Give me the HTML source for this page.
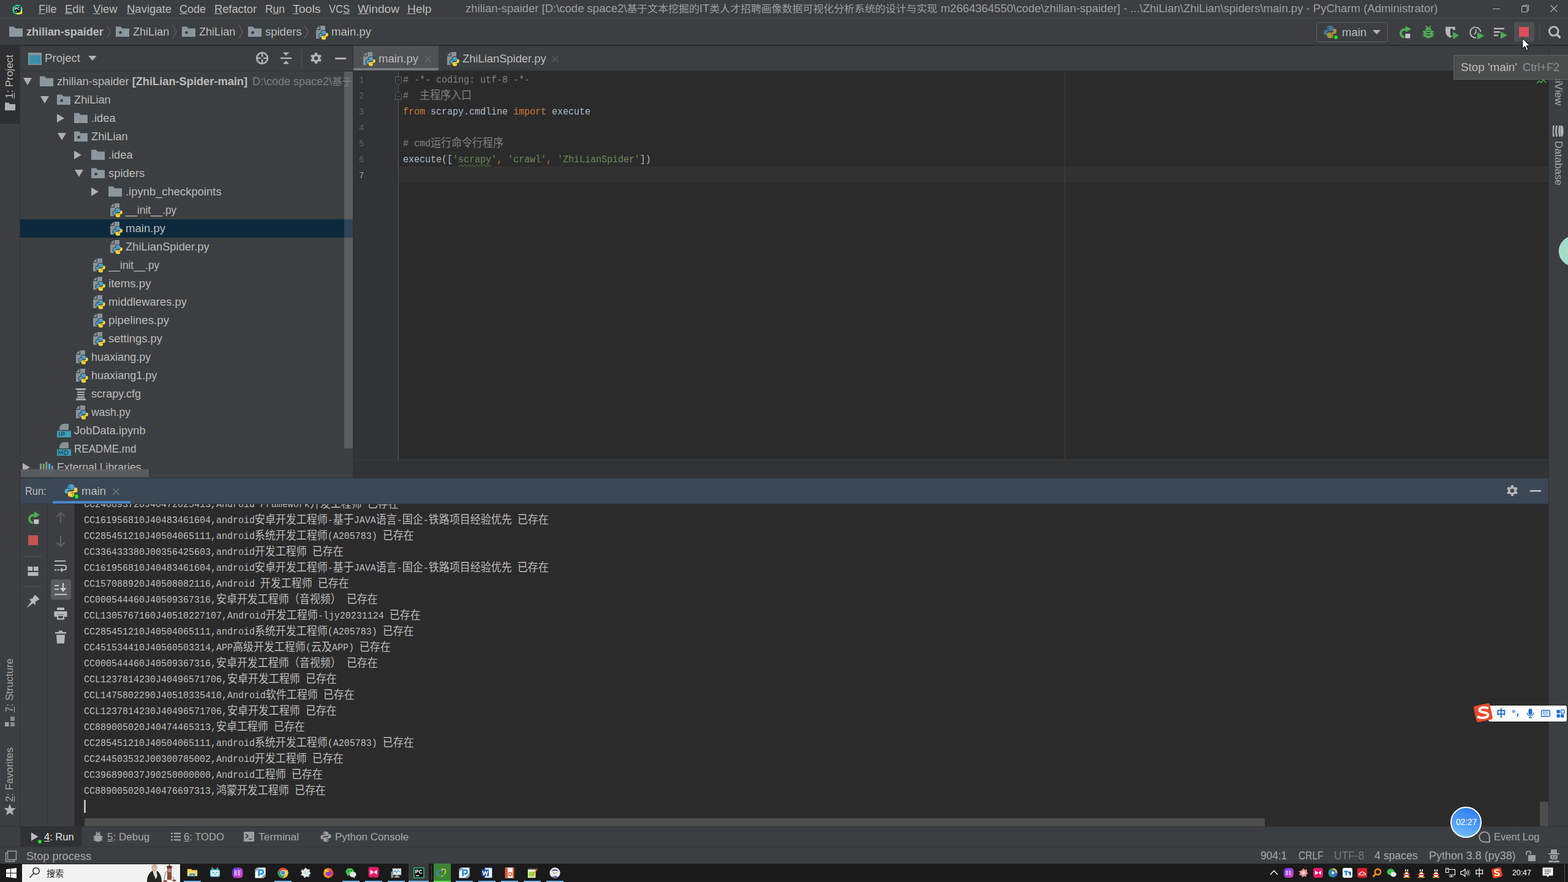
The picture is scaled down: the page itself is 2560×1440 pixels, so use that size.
<!DOCTYPE html>
<html><head><meta charset="utf-8"><title>PyCharm</title><style>
html,body{margin:0;padding:0}
body{width:2560px;height:1440px;overflow:hidden;background:#3c3f41;position:relative;font-family:"Liberation Sans","Noto Sans CJK SC",sans-serif;font-size:18px;color:#bbbbbb}
.a{position:absolute}
.b{position:absolute;display:block}
.t{position:absolute;white-space:pre;font-size:18px;line-height:30px;height:30px;transform-origin:0 50%;color:#bbbbbb}
.t b{font-weight:bold}
.t u{text-decoration:underline;text-underline-offset:1.2px;text-decoration-thickness:1px}
.m{position:absolute;white-space:pre;font-family:"Liberation Mono",monospace;font-size:16.66px;line-height:26px;height:26px;color:#a9b7c6;transform:scaleX(.9);transform-origin:0 50%}
.cj{display:inline-block;position:relative;overflow:hidden;white-space:nowrap;vertical-align:top;height:26px;text-align:left;font-family:"Liberation Sans","Noto Sans CJK SC",sans-serif}
.m .cj{font-size:18.89px;line-height:24px}
.v{position:absolute;white-space:pre;font-size:17px;line-height:30px;height:30px;color:#bbbbbb;transform-origin:0 0}
svg{position:absolute;overflow:visible}
</style></head><body>
<svg width="0" height="0" style="position:absolute;left:-10px;top:-10px"><defs>
<symbol id="folder" viewBox="0 0 22 17"><path d="M0 0.5H8L10.3 3.5H22V17H0Z" fill="#8b979e"/></symbol>
<symbol id="folderdot" viewBox="0 0 22 17"><path d="M0 0.5H8L10.3 3.5H22V17H0Z" fill="#8b979e"/><circle cx="7.6" cy="10.2" r="2.4" fill="#3c3f41"/></symbol>
<g id="pylogo">
<path id="pyhalf" d="M7.9 0.4C5.4 0.4 4.3 1.4 4.3 3.1V5.1H8.1V5.8H2.8C1.1 5.8 0.3 7.1 0.3 8.9C0.3 10.8 1.1 12 2.8 12H4.2V9.8C4.2 8.3 5.4 7.2 6.9 7.2H10.1C11.3 7.2 12.1 6.3 12.1 5.1V3.1C12.1 1.5 10.6 0.4 7.9 0.4Z"/>
</g>
<symbol id="python" viewBox="0 0 16.4 16.4"><use href="#pyhalf" fill="#4ea1cf"/><circle cx="6.1" cy="2.8" r=".8" fill="#2b5b7a"/><use href="#pyhalf" fill="#f5d23c" transform="rotate(180 8.2 8.2)"/><circle cx="10.3" cy="13.6" r=".8" fill="#8a7416"/></symbol>
<symbol id="pythong" viewBox="0 0 16.4 16.4"><use href="#pyhalf" fill="#9da0a2"/><circle cx="6.1" cy="2.8" r=".8" fill="#3c3f41"/><use href="#pyhalf" fill="#9da0a2" transform="rotate(180 8.2 8.2)"/><circle cx="10.3" cy="13.6" r=".8" fill="#3c3f41"/></symbol>
<symbol id="pyfile" viewBox="0 0 22 24"><path d="M8 1H16V13H7V22H1V8Z" fill="#87929a"/><path d="M6.6 1V6.6H1Z" fill="#87929a"/><path d="M7.4 1V7.4H1" fill="none" stroke="#3c3f41" stroke-width="1.2"/>
<g transform="translate(5.6 8.6) scale(0.95)"><use href="#pyhalf" fill="#3c3f41" stroke="#3c3f41" stroke-width="2.2"/><use href="#pyhalf" fill="#3c3f41" stroke="#3c3f41" stroke-width="2.2" transform="rotate(180 8.2 8.2)"/><use href="#pyhalf" fill="#4ea1cf"/><use href="#pyhalf" fill="#f5d23c" transform="rotate(180 8.2 8.2)"/></g></symbol>
<symbol id="cfg" viewBox="0 0 23 22"><path d="M0 2H18L16 5H2Z M3 7.2H15V9.4H3Z M3 11.2H15V13.4H3Z M3 15.2H15V17.4H3Z M2 18.6H16L18 21.6H0Z" fill="#aeb1b3"/></symbol>
<symbol id="ipynb" viewBox="0 0 23 22"><path d="M10 0H19V10H4V6Z" fill="#87929a"/><path d="M8.8 0V4.8H4Z" fill="#87929a"/><rect x="0" y="11.5" width="23" height="11" fill="#3f9fb5"/><path d="M4 13.8V20.2 M7.5 20.2V13.8H10.2C12.8 13.8 12.8 17.6 10.2 17.6H7.5" fill="none" stroke="#23586a" stroke-width="1.7"/></symbol>
<symbol id="md" viewBox="0 0 23 22"><path d="M10 0H19V10H4V6Z" fill="#87929a"/><path d="M8.8 0V4.8H4Z" fill="#87929a"/><rect x="0" y="11.5" width="23" height="11" fill="#3f9fb5"/><path d="M2.8 20.2V13.8L6 18L9.2 13.8V20.2 M12.5 13.8V20.2H14.5C19 20.2 19 13.8 14.5 13.8Z" fill="none" stroke="#23586a" stroke-width="1.7"/></symbol>
<symbol id="libs" viewBox="0 0 23 22"><rect x="0" y="5" width="3" height="16" fill="#87929a"/><rect x="4.7" y="5" width="3" height="16" fill="#62b543"/><rect x="9.4" y="2" width="3" height="19" fill="#87929a"/><rect x="14.1" y="5" width="3" height="16" fill="#40b6e0"/><rect x="18.8" y="8" width="3" height="13" fill="#87929a"/></symbol>
<symbol id="pc" viewBox="0 0 17 17"><path d="M1 4L7 0.6L11.5 1.4L12.5 0.2L12.6 3L16.6 6L16 15L9 16.8L2 14.5L0.4 9Z" fill="#2ed58a"/><path d="M15.6 8L16.2 15.4L9 16.8L5 15.5L12 12.5Z" fill="#e9f24d"/><path d="M12.6 3L16.7 6L16 9.5L12.8 9Z" fill="#2cc6d8"/><rect x="3.6" y="3.6" width="9.7" height="9.7" fill="#000"/><path d="M4.7 11.4H8" stroke="#fff" stroke-width="1"/><path d="M4.9 9V5H6.2C7.8 5 7.8 7.3 6.2 7.3H4.9 M11.9 5.5C10.2 4.4 8.7 5.4 8.7 7C8.7 8.6 10.2 9.6 11.9 8.5" fill="none" stroke="#fff" stroke-width="1.15"/></symbol>
<symbol id="rerun" viewBox="0 0 22 22"><path d="M10.8 19.5A6.2 6.2 0 1 1 12.6 7.3" fill="none" stroke="#4fad53" stroke-width="3.7"/><path d="M12.6 1L22 6.4L12.6 11.8Z" fill="#4fad53"/><rect x="12.3" y="14" width="8" height="7.4" fill="#c3c5c6"/></symbol>
<symbol id="bug" viewBox="0 0 22 22"><path d="M7 1.2L9.2 4 M15 1.2L12.8 4" stroke="#4fad53" stroke-width="2"/><path d="M6 8.2C6 1.8 16 1.8 16 8.2Z" fill="#4fad53"/><path d="M4 9H18V15C18 23.4 4 23.4 4 15Z" fill="#4fad53"/><path d="M1.8 10.8H20.2 M1.8 14.3H20.2 M2.4 17.8H19.6" stroke="#4fad53" stroke-width="2.1"/><rect x="7.6" y="11.3" width="6.8" height="1.7" fill="#3c3f41"/><rect x="7.6" y="15.2" width="6.8" height="1.7" fill="#3c3f41"/></symbol>
<symbol id="bugg" viewBox="0 0 22 22"><path d="M7 1.2L9.2 4 M15 1.2L12.8 4" stroke="#9da0a2" stroke-width="2"/><path d="M6 8.2C6 1.8 16 1.8 16 8.2Z" fill="#9da0a2"/><path d="M4 9H18V15C18 23.4 4 23.4 4 15Z" fill="#9da0a2"/><path d="M1.8 10.8H20.2 M1.8 14.3H20.2 M2.4 17.8H19.6" stroke="#9da0a2" stroke-width="2.1"/></symbol>
<symbol id="coverage" viewBox="0 0 24 22"><path d="M0.1 0.7H15.8V5.9H11.7V15.6C10.4 17 9 18 7.6 18.6C3 16.6 0.1 13 0.1 8Z" fill="#b6b8ba"/><rect x="7.9" y="3.6" width="3.9" height="11.7" fill="#35383a"/><path d="M11.9 8.4L22.6 14.8L11.9 21.3Z" fill="#4fad53" stroke="#31503a" stroke-width=".8"/></symbol>
<symbol id="profile" viewBox="0 0 24 22"><path d="M10 1.5A8.5 8.5 0 1 0 11 18.4 M10 1.5A8.5 8.5 0 0 1 18.4 9" fill="none" stroke="#b6b8ba" stroke-width="2"/><path d="M10.5 5V10.5L7.5 13" fill="none" stroke="#b6b8ba" stroke-width="1.8"/><path d="M13 9.5L24 15.5L13 21.5Z" fill="#4fad53"/></symbol>
<symbol id="concur" viewBox="0 0 24 22"><path d="M1 2.5H18V5H1Z M1 8H11V10.5H1Z M1 13.5H8V16H1Z" fill="#b6b8ba"/><path d="M12 8.5L23 14.5L12 20.5Z" fill="#4fad53"/></symbol>
<symbol id="search" viewBox="0 0 22 22"><circle cx="10.7" cy="10" r="7.3" fill="none" stroke="#b6b8ba" stroke-width="3"/><path d="M15.8 15.1L21.6 20.9" stroke="#b6b8ba" stroke-width="3.6"/></symbol>
<symbol id="projview" viewBox="0 0 22 22"><rect x="0.8" y="1.8" width="20.4" height="18.4" fill="#3a8fa5" stroke="#8b979e" stroke-width="1.6"/><rect x="0" y="1" width="22" height="4" fill="#8b979e"/></symbol>
<symbol id="target" viewBox="0 0 22 22"><circle cx="11" cy="11" r="8.9" fill="none" stroke="#b0b3b5" stroke-width="2.6"/><path d="M11 1V9 M11 13V21 M1 11H9 M13 11H21" stroke="#b0b3b5" stroke-width="2.6"/></symbol>
<symbol id="collapse" viewBox="0 0 22 22"><path d="M2 9.7H20V12.3H2Z M5.8 1.5H16.2L11 7Z M5.8 20.5H16.2L11 15Z" fill="#b0b3b5"/></symbol>
<symbol id="gear" viewBox="0 0 22 22"><path d="M9.2 1H12.8L13.4 3.8L15.4 4.9L18.1 3.9L19.9 7L17.8 8.9V11.1L19.9 13L18.1 16.1L15.4 15.1L13.4 16.2L12.8 19H9.2L8.6 16.2L6.6 15.1L3.9 16.1L2.1 13L4.2 11.1V8.9L2.1 7L3.9 3.9L6.6 4.9L8.6 3.8Z" transform="translate(0 1)" fill="#b0b3b5"/><circle cx="11" cy="11" r="3.1" fill="#3c3f41"/></symbol>
<symbol id="structure" viewBox="0 0 16 16"><rect x="0" y="9" width="6.5" height="7" fill="#9da0a2"/><rect x="9" y="9" width="7" height="7" fill="#9da0a2" opacity=".75"/><rect x="9" y="0" width="7" height="7" fill="#9da0a2" opacity=".75"/></symbol>
<symbol id="star" viewBox="0 0 20 20"><path d="M10 0.5L12.6 7.2L19.8 7.6L14.2 12.1L16.1 19L10 15.1L3.9 19L5.8 12.1L0.2 7.6L7.4 7.2Z" fill="#b0b3b5"/></symbol>
<symbol id="database" viewBox="0 0 18 20"><g fill="none" stroke="#b0b3b5" stroke-width="2.6"><path d="M2 1C0 6 0 14 2 19"/><path d="M7 1C5 6 5 14 7 19"/><path d="M12 1C10 6 10 14 12 19"/></g><ellipse cx="15" cy="10" rx="2.6" ry="9.4" fill="#b0b3b5"/></symbol>
<symbol id="layout" viewBox="0 0 20 18"><rect x="0" y="0" width="9" height="8" fill="#b6b8ba"/><rect x="11" y="0" width="9" height="8" fill="#b6b8ba"/><rect x="0" y="10.5" width="20" height="7.5" fill="#b6b8ba"/></symbol>
<symbol id="pin" viewBox="0 0 22 22"><path d="M14.1 0.1L21.6 7.3L14.9 11.2L14.7 17L10.8 13.7L0.2 22L8 11L4.8 7L9.7 6.5Z" fill="#b6b8ba"/></symbol>
<symbol id="arrup" viewBox="0 0 22 22"><path d="M11 20V3 M4.5 9.5L11 3L17.5 9.5" fill="none" stroke="#5c6062" stroke-width="2.4"/></symbol>
<symbol id="arrdown" viewBox="0 0 22 22"><path d="M11 2V19 M4.5 12.5L11 19L17.5 12.5" fill="none" stroke="#5c6062" stroke-width="2.4"/></symbol>
<symbol id="softwrap" viewBox="0 0 22 22"><path d="M1 3H19 M1 10H16C21.5 10 21.5 17.5 16 17.5H12" fill="none" stroke="#b6b8ba" stroke-width="2.2"/><path d="M14 13.5L9.5 17.5L14 21.5Z" fill="#b6b8ba"/><rect x="1" y="16.4" width="3" height="2.4" fill="#b6b8ba"/><rect x="5.5" y="16.4" width="3" height="2.4" fill="#b6b8ba"/></symbol>
<symbol id="scrollend" viewBox="0 0 22 22"><path d="M1 5H8 M1 11H8 M1 19.5H21" fill="none" stroke="#c7c9ca" stroke-width="2.2"/><path d="M15 1V12" stroke="#c7c9ca" stroke-width="2.4"/><path d="M9.5 9L15 15.5L20.5 9Z" fill="#c7c9ca"/></symbol>
<symbol id="print" viewBox="0 0 22 22"><rect x="5" y="1" width="12" height="4" fill="#b6b8ba"/><path d="M0.5 7H21.5V16H17V12H5V16H0.5Z" fill="#b6b8ba"/><rect x="6.1" y="13.6" width="9.8" height="6" fill="none" stroke="#b6b8ba" stroke-width="2.2"/></symbol>
<symbol id="trash" viewBox="0 0 20 22"><path d="M7 0.5H13V3H19V5.5H1V3H7Z M3 7.5H17L16 21.5H4Z" fill="#b6b8ba"/></symbol>
<symbol id="play" viewBox="0 0 16 18"><path d="M1 1L14 9L1 17Z" fill="#b6b8ba"/></symbol>
<symbol id="todo" viewBox="0 0 16 14"><path d="M0 0.5H3V3H0Z M5 0.5H16V3H5Z M0 5.7H3V8.2H0Z M5 5.7H16V8.2H5Z M0 11H3V13.5H0Z M5 11H16V13.5H5Z" fill="#9da0a2"/></symbol>
<symbol id="term" viewBox="0 0 17 16"><rect x="0" y="0" width="17" height="16" rx="1" fill="#9da0a2"/><path d="M3 3.5L7 7L3 10.5 M8 12H13.5" fill="none" stroke="#3c3f41" stroke-width="1.7"/></symbol>
<symbol id="bubble" viewBox="0 0 19 19"><path d="M9.5 1.2A8.3 8.3 0 1 0 9.5 17.8H17.8V9.5A8.3 8.3 0 0 0 9.5 1.2Z" fill="none" stroke="#9da0a2" stroke-width="2"/></symbol>
<symbol id="lock" viewBox="0 0 18 20"><path d="M2 9V6.5C2 1.5 9 1.5 9 6.5V8" fill="none" stroke="#9da0a2" stroke-width="2"/><rect x="5" y="9" width="12" height="10" fill="#9da0a2"/></symbol>
<symbol id="hector" viewBox="0 0 20 22"><path d="M5 1H15V7H19V9H1V7H5Z" fill="#9da0a2"/><path d="M4 10H16V14C16 19 4 19 4 14Z" fill="#9da0a2"/><circle cx="7.8" cy="12.8" r="1.1" fill="#3c3f41"/><circle cx="12.2" cy="12.8" r="1.1" fill="#3c3f41"/><path d="M7.5 15.2C9 16.6 11 16.6 12.5 15.2" fill="none" stroke="#3c3f41" stroke-width="1"/><path d="M1 22C1 18 5 18 10 20C15 18 19 18 19 22Z" fill="#9da0a2"/></symbol>
</defs></svg>

<div class="a" style="left:0px;top:0px;width:2560px;height:30px;background:#3c3f41;"></div>
<div class="a" style="left:0px;top:29px;width:2560px;height:1px;background:#4b4e50;"></div>
<div class="a" style="left:0px;top:30px;width:2560px;height:44px;background:#3c3f41;"></div>
<div class="a" style="left:0px;top:73px;width:2560px;height:2px;background:#2d2f30;"></div>
<div class="a" style="left:0px;top:75px;width:32px;height:1275px;background:#3c3f41;"></div>
<div class="a" style="left:0px;top:75px;width:32px;height:127px;background:#2d2f30;"></div>
<div class="a" style="left:32px;top:75px;width:1px;height:1275px;background:#323232;"></div>
<div class="a" style="left:33px;top:75px;width:543px;height:40px;background:#3c3f41;"></div>
<div class="a" style="left:33px;top:115px;width:543px;height:1px;background:#323232;"></div>
<div class="a" style="left:33px;top:116px;width:543px;height:665px;background:#3c3f41;"></div>
<div class="a" style="left:33px;top:358px;width:543px;height:30px;background:#0d293e;"></div>
<div class="a" style="left:562px;top:117px;width:14px;height:615px;background:#5a5d5e;"></div>
<div class="a" style="left:562px;top:358px;width:14px;height:30px;background:#2f4557;"></div>
<div class="a" style="left:34px;top:766px;width:209px;height:13px;background:#595b5d;"></div>
<div class="a" style="left:576px;top:75px;width:1px;height:41px;background:#2b2d2e;"></div>
<div class="a" style="left:577px;top:75px;width:1952px;height:40px;background:#3c3f41;"></div>
<div class="a" style="left:577px;top:75px;width:139px;height:40px;background:#4e5254;"></div>
<div class="a" style="left:577px;top:111px;width:139px;height:4px;background:#747a80;"></div>
<div class="a" style="left:577px;top:115px;width:1952px;height:1px;background:#323232;"></div>
<div class="a" style="left:576px;top:116px;width:75px;height:634px;background:#313335;"></div>
<div class="a" style="left:651px;top:116px;width:1878px;height:634px;background:#2b2b2b;"></div>
<div class="a" style="left:650px;top:116px;width:1px;height:634px;background:#555555;"></div>
<div class="a" style="left:651px;top:272px;width:1878px;height:26px;background:#323232;"></div>
<div class="a" style="left:1738px;top:116px;width:1px;height:634px;background:#3f3f3f;"></div>
<div class="a" style="left:576px;top:750px;width:1953px;height:31px;background:#313335;"></div>
<div class="a" style="left:576px;top:750px;width:1953px;height:1px;background:#3a3d3e;"></div>
<div class="a" style="left:2529px;top:75px;width:31px;height:1275px;background:#3c3f41;"></div>
<div class="a" style="left:2528px;top:75px;width:1px;height:1275px;background:#323232;"></div>
<div class="a" style="left:33px;top:781px;width:2495px;height:41px;background:#3b4754;"></div>
<div class="a" style="left:33px;top:780px;width:2495px;height:1px;background:#323232;"></div>
<div class="a" style="left:33px;top:822px;width:2495px;height:1px;background:#2f3a45;"></div>
<div class="a" style="left:86px;top:818px;width:127px;height:4px;background:#4a88c7;"></div>
<div class="a" style="left:33px;top:823px;width:89px;height:527px;background:#3c3f41;"></div>
<div class="a" style="left:77px;top:823px;width:1px;height:527px;background:#323232;"></div>
<div class="a" style="left:121px;top:823px;width:1px;height:527px;background:#323232;"></div>
<div class="a" style="left:122px;top:823px;width:2406px;height:527px;background:#2b2b2b;"></div>
<div class="a" style="left:138px;top:1336px;width:1927px;height:13px;background:#4d4d4d;"></div>
<div class="a" style="left:2514px;top:1309px;width:14px;height:40px;background:#4d4d4d;"></div>
<div class="a" style="left:0px;top:1349px;width:2560px;height:1px;background:#323232;"></div>
<div class="a" style="left:0px;top:1350px;width:2560px;height:33px;background:#3c3f41;"></div>
<div class="a" style="left:33px;top:1350px;width:101px;height:32px;background:#2f3234;"></div>
<div class="a" style="left:0px;top:1382px;width:2560px;height:1px;background:#323232;"></div>
<div class="a" style="left:0px;top:1383px;width:2560px;height:28px;background:#3c3f41;"></div>
<div class="a" style="left:0px;top:1411px;width:2560px;height:29px;background:#1a1a1a;"></div>
<span class="t" style="left:63px;top:0.0px;transform:scaleX(1.0172);"><u>F</u>ile</span>
<span class="t" style="left:106px;top:0.0px;transform:scaleX(1.0161);"><u>E</u>dit</span>
<span class="t" style="left:151.5px;top:0.0px;transform:scaleX(1.0256);"><u>V</u>iew</span>
<span class="t" style="left:206.5px;top:0.0px;transform:scaleX(1.0282);"><u>N</u>avigate</span>
<span class="t" style="left:293px;top:0.0px;transform:scaleX(1.0000);"><u>C</u>ode</span>
<span class="t" style="left:350px;top:0.0px;transform:scaleX(1.0147);"><u>R</u>efactor</span>
<span class="t" style="left:433px;top:0.0px;transform:scaleX(0.9697);">R<u>u</u>n</span>
<span class="t" style="left:478px;top:0.0px;transform:scaleX(1.0833);"><u>T</u>ools</span>
<span class="t" style="left:537px;top:0.0px;transform:scaleX(0.9189);">VC<u>S</u></span>
<span class="t" style="left:584px;top:0.0px;transform:scaleX(1.0625);"><u>W</u>indow</span>
<span class="t" style="left:665px;top:0.0px;transform:scaleX(1.0676);"><u>H</u>elp</span>
<span class="t" style="left:760px;top:-1.0px;color:#9c9ea0;transform:scaleX(1.0285);">zhilian-spaider [D:\code space2\<span class="cj" style="width:115.15px;height:30px;font-size:16.45px;">基于文本挖掘的</span>IT<span class="cj" style="width:361.90px;height:30px;font-size:16.45px;">类人才招聘画像数据可视化分析系统的设计与实现</span> m2664364550\code\zhilian-spaider] - ...\ZhiLian\ZhiLian\spiders\main.py - PyCharm (Administrator)</span>
<svg class="b" style="left:19.5px;top:6.5px;" width="17" height="17"><use href="#pc"/></svg>
<div class="a" style="left:2437px;top:14px;width:12px;height:1px;background:#bbbbbb;"></div>
<svg class="b" style="left:2484px;top:8px" width="12" height="12"><path d="M0.5 2.5h9v9h-9z M2.5 2.5v-2h9v9h-2" fill="none" stroke="#bbb" stroke-width="1"/></svg>
<svg class="b" style="left:2531px;top:8px" width="12" height="12"><path d="M0.5 0.5l11 11M11.5 0.5l-11 11" fill="none" stroke="#bbb" stroke-width="1.1"/></svg>
<svg class="b" style="left:15px;top:43px;" width="22" height="17"><use href="#folder"/></svg>
<span class="t" style="left:43px;top:37.0px;transform:scaleX(0.9968);"><b>zhilian-spaider</b></span>
<svg class="b" style="left:173px;top:40px" width="8" height="24"><path d="M1 1l6 11l-6 11" fill="none" stroke="#5f6265" stroke-width="1.3"/></svg>
<svg class="b" style="left:189px;top:43px;" width="22" height="17"><use href="#folderdot"/></svg>
<span class="t" style="left:217.4px;top:37.0px;transform:scaleX(1.0034);">ZhiLian</span>
<svg class="b" style="left:281px;top:40px" width="8" height="24"><path d="M1 1l6 11l-6 11" fill="none" stroke="#5f6265" stroke-width="1.3"/></svg>
<svg class="b" style="left:297px;top:43px;" width="22" height="17"><use href="#folderdot"/></svg>
<span class="t" style="left:325.4px;top:37.0px;transform:scaleX(1.0034);">ZhiLian</span>
<svg class="b" style="left:389px;top:40px" width="8" height="24"><path d="M1 1l6 11l-6 11" fill="none" stroke="#5f6265" stroke-width="1.3"/></svg>
<svg class="b" style="left:405px;top:43px;" width="22" height="17"><use href="#folderdot"/></svg>
<span class="t" style="left:433px;top:37.0px;transform:scaleX(1.0259);">spiders</span>
<svg class="b" style="left:496px;top:40px" width="8" height="24"><path d="M1 1l6 11l-6 11" fill="none" stroke="#5f6265" stroke-width="1.3"/></svg>
<svg class="b" style="left:515px;top:41px;" width="22" height="24"><use href="#pyfile"/></svg>
<span class="t" style="left:541px;top:37.0px;transform:scaleX(1.0317);">main.py</span>
<div class="a" style="left:2149px;top:36px;width:115px;height:31px;border:1px solid #5e6162;border-radius:4px"></div>
<svg class="b" style="left:2161px;top:41px;opacity:.58" width="21.5" height="22"><use href="#python"/></svg>
<div class="a" style="left:2176.6px;top:56.8px;width:8.8px;height:8.8px;border-radius:5px;background:#2e3a30"></div><div class="a" style="left:2177.7px;top:57.9px;width:6.6px;height:6.6px;border-radius:4px;background:#22e02a"></div>
<span class="t" style="left:2190.5px;top:37.5px;transform:scaleX(1.0256);">main</span>
<svg class="b" style="left:2241.2px;top:49px" width="13.2" height="7" viewBox="0 0 13.2 7"><path d="M0 0h13.2l-6.6 7z" fill="#b0b3b5"/></svg>
<svg class="b" style="left:2282px;top:41px;" width="22" height="22"><use href="#rerun"/></svg>
<svg class="b" style="left:2321px;top:41px;" width="22" height="22"><use href="#bug"/></svg>
<svg class="b" style="left:2360px;top:42.5px;" width="24" height="22"><use href="#coverage"/></svg>
<svg class="b" style="left:2399px;top:42.5px;" width="24" height="22"><use href="#profile"/></svg>
<svg class="b" style="left:2438px;top:42.5px;" width="24" height="22"><use href="#concur"/></svg>
<div class="a" style="left:2472px;top:36px;width:33px;height:32px;border-radius:4px;background:#4c5052"></div>
<div class="a" style="left:2480px;top:44px;width:16px;height:16px;background:#db4f59;"></div>
<div class="a" style="left:2513px;top:41px;width:1px;height:24px;background:#505355;"></div>
<svg class="b" style="left:2526px;top:41px;" width="22" height="22"><use href="#search"/></svg>
<span class="v" style="left:1px;top:161px;transform:rotate(-90deg)"><u style="text-underline-offset:2px;text-decoration-thickness:1px">1</u>: Project</span>
<svg class="b" style="left:7.5px;top:167px" width="17" height="13.5" viewBox="0 0 22 17"><path d="M0 0.5H8L10.3 3.5H22V17H0Z" fill="#afb1b3"/></svg>
<span class="v" style="left:1px;top:1163px;transform:rotate(-90deg);color:#a6a8aa"><u style="text-underline-offset:2px;text-decoration-thickness:1px">7</u>: Structure</span>
<svg class="b" style="left:8px;top:1170px;" width="16" height="16"><use href="#structure"/></svg>
<span class="v" style="left:1px;top:1309px;transform:rotate(-90deg);color:#a6a8aa"><u style="text-underline-offset:2px;text-decoration-thickness:1px">2</u>: Favorites</span>
<svg class="b" style="left:6px;top:1312px;" width="20" height="20"><use href="#star"/></svg>
<span class="v" style="left:2559px;top:112px;transform:rotate(90deg);color:#a6a8aa">SciView</span>
<svg class="b" style="left:2535px;top:204px;" width="18" height="20"><use href="#database"/></svg>
<span class="v" style="left:2559px;top:230px;transform:rotate(90deg);color:#a6a8aa">Database</span>
<svg class="b" style="left:46px;top:85px;" width="22" height="22"><use href="#projview"/></svg>
<span class="t" style="left:73px;top:80.0px;transform:scaleX(1.0357);">Project</span>
<svg class="b" style="left:144px;top:91px" width="14" height="9"><path d="M0 0h14l-7 8z" fill="#b0b3b5"/></svg>
<svg class="b" style="left:417px;top:84px;" width="22" height="22"><use href="#target"/></svg>
<svg class="b" style="left:456px;top:84px;" width="22" height="22"><use href="#collapse"/></svg>
<div class="a" style="left:492px;top:80px;width:1px;height:30px;background:#505355;"></div>
<svg class="b" style="left:505px;top:84px;" width="22" height="22"><use href="#gear"/></svg>
<div class="a" style="left:547px;top:94px;width:18px;height:3px;background:#afb1b3;"></div>
<svg class="b" style="left:38px;top:126.5px" width="14" height="12"><path d="M0 0h14l-7 12z" fill="#adb0b2"/></svg>
<svg class="b" style="left:65px;top:124.0px;" width="22" height="17"><use href="#folder"/></svg>
<span class="t" style="left:93px;top:117.5px;transform:scaleX(1.0130);">zhilian-spaider <b>[ZhiLian-Spider-main]</b></span>
<svg class="b" style="left:66px;top:156.5px" width="14" height="12"><path d="M0 0h14l-7 12z" fill="#adb0b2"/></svg>
<svg class="b" style="left:93px;top:154.0px;" width="22" height="17"><use href="#folderdot"/></svg>
<span class="t" style="left:121px;top:147.5px;transform:scaleX(1.0119);">ZhiLian</span>
<svg class="b" style="left:93px;top:185.5px" width="12" height="14"><path d="M0 0v14l12-7z" fill="#adb0b2"/></svg>
<svg class="b" style="left:121px;top:184.0px;" width="22" height="17"><use href="#folder"/></svg>
<span class="t" style="left:149px;top:177.5px;transform:scaleX(1.0128);">.idea</span>
<svg class="b" style="left:94px;top:216.5px" width="14" height="12"><path d="M0 0h14l-7 12z" fill="#adb0b2"/></svg>
<svg class="b" style="left:121px;top:214.0px;" width="22" height="17"><use href="#folderdot"/></svg>
<span class="t" style="left:149px;top:207.5px;transform:scaleX(1.0119);">ZhiLian</span>
<svg class="b" style="left:121px;top:245.5px" width="12" height="14"><path d="M0 0v14l12-7z" fill="#adb0b2"/></svg>
<svg class="b" style="left:149px;top:244.0px;" width="22" height="17"><use href="#folder"/></svg>
<span class="t" style="left:177px;top:237.5px;transform:scaleX(1.0128);">.idea</span>
<svg class="b" style="left:122px;top:276.5px" width="14" height="12"><path d="M0 0h14l-7 12z" fill="#adb0b2"/></svg>
<svg class="b" style="left:149px;top:274.0px;" width="22" height="17"><use href="#folderdot"/></svg>
<span class="t" style="left:177px;top:267.5px;transform:scaleX(1.0224);">spiders</span>
<svg class="b" style="left:149px;top:305.5px" width="12" height="14"><path d="M0 0v14l12-7z" fill="#adb0b2"/></svg>
<svg class="b" style="left:177px;top:304.0px;" width="22" height="17"><use href="#folder"/></svg>
<span class="t" style="left:205px;top:297.5px;transform:scaleX(1.0229);">.ipynb_checkpoints</span>
<svg class="b" style="left:179px;top:330.5px;" width="22" height="24"><use href="#pyfile"/></svg>
<span class="t" style="left:205px;top:327.5px;transform:scaleX(0.9540);">__init__.py</span>
<svg class="b" style="left:179px;top:360.5px;" width="22" height="24"><use href="#pyfile"/></svg>
<span class="t" style="left:205px;top:357.5px;transform:scaleX(1.0317);">main.py</span>
<svg class="b" style="left:179px;top:390.5px;" width="22" height="24"><use href="#pyfile"/></svg>
<span class="t" style="left:205px;top:387.5px;transform:scaleX(1.0187);">ZhiLianSpider.py</span>
<svg class="b" style="left:151px;top:420.5px;" width="22" height="24"><use href="#pyfile"/></svg>
<span class="t" style="left:177px;top:417.5px;transform:scaleX(0.9540);">__init__.py</span>
<svg class="b" style="left:151px;top:450.5px;" width="22" height="24"><use href="#pyfile"/></svg>
<span class="t" style="left:177px;top:447.5px;transform:scaleX(1.0373);">items.py</span>
<svg class="b" style="left:151px;top:480.5px;" width="22" height="24"><use href="#pyfile"/></svg>
<span class="t" style="left:177px;top:477.5px;transform:scaleX(1.0240);">middlewares.py</span>
<svg class="b" style="left:151px;top:510.5px;" width="22" height="24"><use href="#pyfile"/></svg>
<span class="t" style="left:177px;top:507.5px;transform:scaleX(1.0421);">pipelines.py</span>
<svg class="b" style="left:151px;top:540.5px;" width="22" height="24"><use href="#pyfile"/></svg>
<span class="t" style="left:177px;top:537.5px;transform:scaleX(1.0233);">settings.py</span>
<svg class="b" style="left:123px;top:570.5px;" width="22" height="24"><use href="#pyfile"/></svg>
<span class="t" style="left:149px;top:567.5px;transform:scaleX(1.0031);">huaxiang.py</span>
<svg class="b" style="left:123px;top:600.5px;" width="22" height="24"><use href="#pyfile"/></svg>
<span class="t" style="left:149px;top:597.5px;transform:scaleX(1.0028);">huaxiang1.py</span>
<svg class="b" style="left:123px;top:631.5px;" width="23" height="22"><use href="#cfg"/></svg>
<span class="t" style="left:149px;top:627.5px;transform:scaleX(1.0062);">scrapy.cfg</span>
<svg class="b" style="left:123px;top:660.5px;" width="22" height="24"><use href="#pyfile"/></svg>
<span class="t" style="left:149px;top:657.5px;transform:scaleX(0.9697);">wash.py</span>
<svg class="b" style="left:93px;top:691.5px;" width="23" height="22"><use href="#ipynb"/></svg>
<span class="t" style="left:121px;top:687.5px;transform:scaleX(1.0130);">JobData.ipynb</span>
<svg class="b" style="left:93px;top:721.5px;" width="23" height="22"><use href="#md"/></svg>
<span class="t" style="left:121px;top:717.5px;transform:scaleX(0.9486);">README.md</span>
<svg class="b" style="left:37px;top:755.5px" width="12" height="14"><path d="M0 0v14l12-7z" fill="#adb0b2"/></svg>
<svg class="b" style="left:65px;top:751.5px;" width="23" height="22"><use href="#libs"/></svg>
<span class="t" style="left:93px;top:747.5px;transform:scaleX(0.9821);">External Libraries</span>
<span class="t" style="left:412px;top:117.5px;color:#7d8082;">D:\code space2\<span class="cj" style="width:32.90px;height:30px;font-size:16.45px;">基于</span></span>
<div class="a" style="left:34px;top:766px;width:209px;height:13px;background:#595b5d;opacity:.85"></div>
<svg class="b" style="left:592px;top:84px;" width="22" height="24"><use href="#pyfile"/></svg>
<span class="t" style="left:618px;top:80.5px;transform:scaleX(1.0317);">main.py</span>
<svg class="b" style="left:692.5px;top:90.5px" width="11" height="11"><path d="M0.5 0.5l10 10M10.5 0.5l-10 10" fill="none" stroke="#6e7173" stroke-width="1.3"/></svg>
<svg class="b" style="left:729px;top:84px;" width="22" height="24"><use href="#pyfile"/></svg>
<span class="t" style="left:755px;top:80.5px;transform:scaleX(1.0187);">ZhiLianSpider.py</span>
<svg class="b" style="left:900.9px;top:90.5px" width="11" height="11"><path d="M0.5 0.5l10 10M10.5 0.5l-10 10" fill="none" stroke="#606365" stroke-width="1.3"/></svg>
<span class="m" style="left:585.5px;top:118px;color:#606366;font-size:15.5px">1</span>
<span class="m" style="left:585.5px;top:144px;color:#606366;font-size:15.5px">2</span>
<span class="m" style="left:585.5px;top:170px;color:#606366;font-size:15.5px">3</span>
<span class="m" style="left:585.5px;top:196px;color:#606366;font-size:15.5px">4</span>
<span class="m" style="left:585.5px;top:222px;color:#606366;font-size:15.5px">5</span>
<span class="m" style="left:585.5px;top:248px;color:#606366;font-size:15.5px">6</span>
<span class="m" style="left:585.5px;top:274px;color:#a4a3a3;font-size:15.5px">7</span>
<span class="m" style="left:658px;top:118px;color:#808080;"># -*- coding: utf-8 -*-</span>
<span class="m" style="left:658px;top:144px;color:#808080;">#  <span class="cj" style="width:94.44px;height:26px;">主程序入口</span></span>
<span class="m" style="left:658px;top:170px;"><span style="color:#cc7832">from</span> scrapy.cmdline <span style="color:#cc7832">import</span> execute</span>
<span class="m" style="left:658px;top:222px;color:#808080;"># cmd<span class="cj" style="width:132.22px;height:26px;">运行命令行程序</span></span>
<span class="m" style="left:658px;top:248px;">execute([<span style='color:#6a8759'>'<span style="text-decoration:underline wavy #5a8a4a;text-decoration-thickness:1px;text-underline-offset:3px">scrapy</span>'</span><span style='color:#cc7832'>,</span> <span style='color:#6a8759'>'crawl'</span><span style='color:#cc7832'>,</span> <span style='color:#6a8759'>'ZhiLianSpider'</span>])</span>
<svg class="b" style="left:645px;top:124.5px" width="11" height="40"><path d="M0.5 0.5h10v8.5l-5 4.5l-5-4.5z M0.5 37.5h10v-8.5l-5-4.5l-5 4.5z" fill="#2b2b2b" stroke="#606366" stroke-width="1"/><path d="M3 5.5h5 M3 32.5h5" stroke="#606366" stroke-width="1"/></svg>
<svg class="b" style="left:2508px;top:128px" width="18" height="12"><path d="M1 8l4-4l3 3l4-5l4 5" fill="none" stroke="#3faa47" stroke-width="1.6"/></svg>
<span class="t" style="left:41px;top:786.5px;transform:scaleX(0.9079);">Run:</span>
<svg class="b" style="left:105px;top:790px;" width="22" height="22"><use href="#python"/></svg>
<div class="a" style="left:120.8px;top:805.9px;width:8.8px;height:8.8px;border-radius:5px;background:#2e4236"></div><div class="a" style="left:121.9px;top:807px;width:6.6px;height:6.6px;border-radius:4px;background:#22e02a"></div>
<span class="t" style="left:132.5px;top:786.5px;transform:scaleX(1.0256);">main</span>
<svg class="b" style="left:183.7px;top:796.5px" width="11" height="11"><path d="M0.5 0.5l10 10M10.5 0.5l-10 10" fill="none" stroke="#72808c" stroke-width="1.3"/></svg>
<svg class="b" style="left:2458px;top:790px;" width="22" height="22"><use href="#gear"/></svg>
<div class="a" style="left:2498px;top:800px;width:18px;height:3px;background:#afb1b3;"></div>
<svg class="b" style="left:43px;top:834px;" width="22" height="22"><use href="#rerun"/></svg>
<div class="a" style="left:46px;top:874px;width:16px;height:16px;background:#c75450;"></div>
<div class="a" style="left:39px;top:908px;width:30px;height:1px;background:#505355;"></div>
<svg class="b" style="left:45px;top:924.5px;" width="18" height="15.5"><use href="#layout"/></svg>
<div class="a" style="left:39px;top:957px;width:30px;height:1px;background:#505355;"></div>
<svg class="b" style="left:43px;top:971px;" width="22" height="22"><use href="#pin"/></svg>
<svg class="b" style="left:88px;top:834px;" width="22" height="22"><use href="#arrup"/></svg>
<svg class="b" style="left:88px;top:873px;" width="22" height="22"><use href="#arrdown"/></svg>
<svg class="b" style="left:88px;top:913px;" width="22" height="22"><use href="#softwrap"/></svg>
<div class="a" style="left:83px;top:946px;width:33px;height:33px;border-radius:4px;background:#595b5d"></div>
<svg class="b" style="left:88px;top:951px;" width="22" height="22"><use href="#scrollend"/></svg>
<svg class="b" style="left:88px;top:991px;" width="22" height="22"><use href="#print"/></svg>
<svg class="b" style="left:89px;top:1029px;" width="20" height="22"><use href="#trash"/></svg>
<div class="a" style="left:122px;top:823px;width:2392px;height:513px;overflow:hidden">
<span class="m" style="left:15px;top:-12px;color:#bbbbbb">CC248893720J40472025413,Android Framework<span class="cj" style="width:94.44px;height:26px;">开发工程师</span> <span class="cj" style="width:56.67px;height:26px;">已存在</span></span>
<span class="m" style="left:15px;top:14px;color:#bbbbbb">CC161956810J40483461604,android<span class="cj" style="width:132.22px;height:26px;">安卓开发工程师</span>-<span class="cj" style="width:37.78px;height:26px;">基于</span>JAVA<span class="cj" style="width:37.78px;height:26px;">语言</span>-<span class="cj" style="width:37.78px;height:26px;">国企</span>-<span class="cj" style="width:151.11px;height:26px;">铁路项目经验优先</span> <span class="cj" style="width:56.67px;height:26px;">已存在</span></span>
<span class="m" style="left:15px;top:40px;color:#bbbbbb">CC285451210J40504065111,android<span class="cj" style="width:132.22px;height:26px;">系统开发工程师</span>(A205783) <span class="cj" style="width:56.67px;height:26px;">已存在</span></span>
<span class="m" style="left:15px;top:66px;color:#bbbbbb">CC336433380J00356425603,android<span class="cj" style="width:94.44px;height:26px;">开发工程师</span> <span class="cj" style="width:56.67px;height:26px;">已存在</span></span>
<span class="m" style="left:15px;top:92px;color:#bbbbbb">CC161956810J40483461604,android<span class="cj" style="width:132.22px;height:26px;">安卓开发工程师</span>-<span class="cj" style="width:37.78px;height:26px;">基于</span>JAVA<span class="cj" style="width:37.78px;height:26px;">语言</span>-<span class="cj" style="width:37.78px;height:26px;">国企</span>-<span class="cj" style="width:151.11px;height:26px;">铁路项目经验优先</span> <span class="cj" style="width:56.67px;height:26px;">已存在</span></span>
<span class="m" style="left:15px;top:118px;color:#bbbbbb">CC157088920J40508082116,Android <span class="cj" style="width:94.44px;height:26px;">开发工程师</span> <span class="cj" style="width:56.67px;height:26px;">已存在</span></span>
<span class="m" style="left:15px;top:144px;color:#bbbbbb">CC000544460J40509367316,<span class="cj" style="width:226.67px;height:26px;">安卓开发工程师（音视频）</span> <span class="cj" style="width:56.67px;height:26px;">已存在</span></span>
<span class="m" style="left:15px;top:170px;color:#bbbbbb">CCL1305767160J40510227107,Android<span class="cj" style="width:94.44px;height:26px;">开发工程师</span>-ljy20231124 <span class="cj" style="width:56.67px;height:26px;">已存在</span></span>
<span class="m" style="left:15px;top:196px;color:#bbbbbb">CC285451210J40504065111,android<span class="cj" style="width:132.22px;height:26px;">系统开发工程师</span>(A205783) <span class="cj" style="width:56.67px;height:26px;">已存在</span></span>
<span class="m" style="left:15px;top:222px;color:#bbbbbb">CC451534410J40560503314,APP<span class="cj" style="width:132.22px;height:26px;">高级开发工程师</span>(<span class="cj" style="width:37.78px;height:26px;">云及</span>APP) <span class="cj" style="width:56.67px;height:26px;">已存在</span></span>
<span class="m" style="left:15px;top:248px;color:#bbbbbb">CC000544460J40509367316,<span class="cj" style="width:226.67px;height:26px;">安卓开发工程师（音视频）</span> <span class="cj" style="width:56.67px;height:26px;">已存在</span></span>
<span class="m" style="left:15px;top:274px;color:#bbbbbb">CCL1237814230J40496571706,<span class="cj" style="width:132.22px;height:26px;">安卓开发工程师</span> <span class="cj" style="width:56.67px;height:26px;">已存在</span></span>
<span class="m" style="left:15px;top:300px;color:#bbbbbb">CCL1475802290J40510335410,Android<span class="cj" style="width:94.44px;height:26px;">软件工程师</span> <span class="cj" style="width:56.67px;height:26px;">已存在</span></span>
<span class="m" style="left:15px;top:326px;color:#bbbbbb">CCL1237814230J40496571706,<span class="cj" style="width:132.22px;height:26px;">安卓开发工程师</span> <span class="cj" style="width:56.67px;height:26px;">已存在</span></span>
<span class="m" style="left:15px;top:352px;color:#bbbbbb">CC889005020J40474465313,<span class="cj" style="width:94.44px;height:26px;">安卓工程师</span> <span class="cj" style="width:56.67px;height:26px;">已存在</span></span>
<span class="m" style="left:15px;top:378px;color:#bbbbbb">CC285451210J40504065111,android<span class="cj" style="width:132.22px;height:26px;">系统开发工程师</span>(A205783) <span class="cj" style="width:56.67px;height:26px;">已存在</span></span>
<span class="m" style="left:15px;top:404px;color:#bbbbbb">CC244503532J00300785002,Android<span class="cj" style="width:94.44px;height:26px;">开发工程师</span> <span class="cj" style="width:56.67px;height:26px;">已存在</span></span>
<span class="m" style="left:15px;top:430px;color:#bbbbbb">CC396890037J90250000000,Android<span class="cj" style="width:56.67px;height:26px;">工程师</span> <span class="cj" style="width:56.67px;height:26px;">已存在</span></span>
<span class="m" style="left:15px;top:456px;color:#bbbbbb">CC889005020J40476697313,<span class="cj" style="width:132.22px;height:26px;">鸿蒙开发工程师</span> <span class="cj" style="width:56.67px;height:26px;">已存在</span></span>
</div>
<div class="a" style="left:137px;top:1306px;width:2.6px;height:21px;background:#bbbbbb;"></div>
<svg class="b" style="left:50px;top:1358.3px;" width="14.2" height="16"><use href="#play"/></svg>
<div class="a" style="left:61.8px;top:1371px;width:6.4px;height:6.4px;border-radius:4px;background:#22e02a"></div>
<span class="t" style="left:72px;top:1351.5px;color:#e4e4e4;font-size:17px;transform:scaleX(0.9700);"><u>4</u>: Run</span>
<svg class="b" style="left:151px;top:1357px;" width="18" height="18"><use href="#bugg"/></svg>
<span class="t" style="left:175px;top:1351.5px;color:#a6a8aa;font-size:17px;transform:scaleX(1.0029);"><u>5</u>: Debug</span>
<svg class="b" style="left:279px;top:1359px;" width="16" height="14"><use href="#todo"/></svg>
<span class="t" style="left:300px;top:1351.5px;color:#a6a8aa;font-size:17px;transform:scaleX(0.9776);"><u>6</u>: TODO</span>
<svg class="b" style="left:398px;top:1358px;" width="17" height="16"><use href="#term"/></svg>
<span class="t" style="left:421.5px;top:1351.5px;color:#a6a8aa;font-size:17px;transform:scaleX(1.0312);">Terminal</span>
<svg class="b" style="left:523px;top:1357px;" width="18" height="18"><use href="#pythong"/></svg>
<span class="t" style="left:546.5px;top:1351.5px;color:#a6a8aa;font-size:17px;transform:scaleX(1.0025);">Python Console</span>
<svg class="b" style="left:2414px;top:1357px;" width="19" height="19"><use href="#bubble"/></svg>
<span class="t" style="left:2438.7px;top:1351.5px;color:#a6a8aa;font-size:17px;transform:scaleX(0.9714);">Event Log</span>
<svg class="b" style="left:8px;top:1388px" width="20" height="20"><path d="M4.5 1.5h14v14h-14z M4.5 4.5h-3v14h14v-3" fill="none" stroke="#9da0a2" stroke-width="1.4"/></svg>
<span class="t" style="left:42.5px;top:1383.0px;color:#a6a8aa;transform:scaleX(1.0095);">Stop process</span>
<span class="t" style="left:2057.5px;top:1381.5px;color:#a6a8aa;transform:scaleX(0.9556);">904:1</span>
<span class="t" style="left:2119.5px;top:1381.5px;color:#a6a8aa;transform:scaleX(0.8617);">CRLF</span>
<span class="t" style="left:2177.5px;top:1381.5px;color:#787a7c;transform:scaleX(0.9608);">UTF-8</span>
<span class="t" style="left:2244px;top:1381.5px;color:#a6a8aa;transform:scaleX(0.9792);">4 spaces</span>
<span class="t" style="left:2332.5px;top:1381.5px;color:#a6a8aa;transform:scaleX(0.9965);">Python 3.8 (py38)</span>
<svg class="b" style="left:2490px;top:1387px;" width="18" height="20"><use href="#lock"/></svg>
<svg class="b" style="left:2527px;top:1386px;" width="20" height="22"><use href="#hector"/></svg>
<div class="a" style="left:0px;top:1410px;width:2560px;height:30px;background:#1a1a1a;"></div>
<svg class="b" style="left:10px;top:1417px" width="17" height="17"><path d="M0 2.3L7 1.3V8H0Z M8 1.2L17 0V8H8Z M0 9H7V15.7L0 14.7Z M8 9H17V17L8 15.8Z" fill="#fff"/></svg>
<div class="a" style="left:36px;top:1411px;width:258px;height:29px;background:#f2f2f2;"></div>
<svg class="b" style="left:47px;top:1415px" width="20" height="20"><circle cx="12" cy="7" r="5.2" fill="none" stroke="#222" stroke-width="1.5"/><path d="M8.4 10.8L1.5 17.8" stroke="#222" stroke-width="1.6"/></svg>
<span class="a" style="left:76px;top:1416px;width:28px;height:20px;line-height:20px;font-size:14px;color:#222;white-space:nowrap;overflow:hidden;font-family:'Liberation Sans','Noto Sans CJK SC',sans-serif">搜索</span>
<svg class="b" style="left:240px;top:1411px" width="54" height="29"><ellipse cx="12" cy="6.2" rx="4.7" ry="6.2" fill="#d6bca4"/><path d="M7.4 5.5C7.6 -1.5 16.4 -1.5 16.6 5.5C15 2.5 9 2.5 7.4 5.5Z" fill="#b9b0a2"/><path d="M0 29C0 20 3 15 8.6 10.6L12.6 15L16.8 10.8C22 15 24 22 24 29Z" fill="#24251f"/><path d="M9.6 11.8L12.3 13.2L15.4 11.6L17 19L14.2 24.5L11 17Z" fill="#dadad0"/><rect x="33" y="4" width="7.2" height="21.5" fill="#8b4b3a"/><rect x="33.8" y="7.5" width="5.6" height="5.5" fill="#b39685"/><rect x="32.4" y="2.8" width="8.4" height="3" fill="#5a2a20"/><rect x="35.6" y="0.5" width="2" height="2.6" fill="#4a2a22"/><path d="M33 12.2L30.6 12.8L28 23.5L29.2 27" fill="none" stroke="#777" stroke-width="1"/><path d="M40.2 20.5C43 20.5 44 23 44.2 26" fill="none" stroke="#b9a79a" stroke-width="1.4"/><ellipse cx="29.8" cy="27.6" rx="3.3" ry="1.3" fill="#7a3a2c"/><ellipse cx="44.4" cy="26.6" rx="3.2" ry="1.3" fill="#7a3a2c"/></svg>
<svg class="b" style="left:305.0px;top:1416px" width="18" height="18" viewBox="0 0 20 20"><path d="M1 3H8L10 5H19V15H1Z" fill="#f7c948"/><path d="M1 7H19V16H1Z" fill="#fbdc6e"/><path d="M5 11H15V17H12V14H8V17H5Z" fill="#3b8fd8"/></svg>
<div class="a" style="left:300px;top:1438px;width:28px;height:2px;background:#76b9ed;"></div>
<svg class="b" style="left:342.0px;top:1416px" width="18" height="18" viewBox="0 0 20 20"><path d="M4 0.5L7 3.5 M16 0.5L13 3.5" stroke="#6cc6e8" stroke-width="1.8"/><rect x="1" y="3.5" width="18" height="14" rx="3.5" fill="#6cc6e8"/><rect x="3" y="5.5" width="14" height="10" rx="2" fill="#d9f1fa"/><path d="M5.5 9.5H8.5 M11.5 9.5H14.5 M8.5 12.5H11.5" stroke="#3b8db0" stroke-width="1.3"/></svg>
<svg class="b" style="left:379.0px;top:1416px" width="18" height="18" viewBox="0 0 20 20"><defs><linearGradient id="pg" x1="0" y1="0" x2="1" y2="1"><stop offset="0" stop-color="#5d3be8"/><stop offset="1" stop-color="#e83bb8"/></linearGradient></defs><rect x="0.5" y="0.5" width="19" height="19" rx="6" fill="url(#pg)"/><path d="M5 5V15 M7.5 5V15 M10 5L15 8 M10 8L15 11 M10 11L15 14 M10 14V15 M12.5 13V15 M15 5V6" stroke="#fff" stroke-width="1.2"/></svg>
<svg class="b" style="left:416.0px;top:1416px" width="18" height="18" viewBox="0 0 20 20"><path d="M4 0.5H19.5V16L16 19.5H0.5V4Z" fill="#f4f6f8"/><path d="M0.5 4L4 0.5H9L0.5 9Z M19.5 16L16 19.5H11L19.5 11Z" fill="#8c9aa5"/><path d="M7.5 16V5H12C16.5 5 16.5 12 12 12H9.5" fill="none" stroke="#1d8fe8" stroke-width="3"/></svg>
<svg class="b" style="left:453.0px;top:1416px" width="18" height="18" viewBox="0 0 20 20"><circle cx="10" cy="10" r="9.5" fill="#de4a3c"/><path d="M10 10L1.8 5.2A9.5 9.5 0 0 0 10 19.5L14.5 12.6Z" fill="#2da04f"/><path d="M10 10L14.5 12.6L10 19.5A9.5 9.5 0 0 0 18.2 5.2H10Z" fill="#f9c62e"/><circle cx="10" cy="10" r="4.6" fill="#fff"/><circle cx="10" cy="10" r="3.6" fill="#3f82e8"/></svg>
<div class="a" style="left:448px;top:1438px;width:28px;height:2px;background:#76b9ed;"></div>
<svg class="b" style="left:490.0px;top:1416px" width="18" height="18" viewBox="0 0 20 20"><path d="M10 0.5L13 4L17.5 3.5L17 8L19.5 11L16 13.5L15.5 18L11.5 16.5L8 19.5L6 15.5L1.5 14.5L3.5 10.5L1 6.5L5.5 5.5Z" fill="#e8f3f0"/><circle cx="10" cy="10" r="4" fill="#bfe3dc"/><circle cx="4" cy="4.5" r="1.5" fill="#d87a3c"/><circle cx="16.5" cy="15.5" r="1.5" fill="#3c9a8a"/></svg>
<svg class="b" style="left:527.0px;top:1416px" width="18" height="18" viewBox="0 0 20 20"><circle cx="10" cy="10.5" r="9" fill="#ff8a1e"/><path d="M10 1.5C14 3 17 6 18.5 9C19 14 16 19 10 19.5C15 17 16 10 10 1.5Z" fill="#ff3b47"/><circle cx="10.5" cy="11" r="4.6" fill="#7a3fd8"/><path d="M3 4C4 3 6 3.5 7 5C9 5 11 6 11 8C9 8 8 9.5 6 9C4 9 2.5 7 3 4Z" fill="#ffbd2e"/></svg>
<svg class="b" style="left:564.0px;top:1416px" width="18" height="18" viewBox="0 0 20 20"><ellipse cx="8" cy="8" rx="7.5" ry="6.5" fill="#3fc350"/><path d="M3.5 13L3 16.5L7 14Z" fill="#3fc350"/><ellipse cx="13.5" cy="13" rx="6" ry="5" fill="#e6e6e6"/><path d="M16.5 17L17.5 19.5L14 18Z" fill="#e6e6e6"/><circle cx="5.5" cy="6.5" r="1" fill="#1c6b28"/><circle cx="10.5" cy="6.5" r="1" fill="#1c6b28"/></svg>
<div class="a" style="left:559px;top:1438px;width:28px;height:2px;background:#76b9ed;"></div>
<svg class="b" style="left:601.0px;top:1415px" width="18" height="18" viewBox="0 0 20 20"><rect x="0.5" y="0.5" width="19" height="19" rx="4.5" fill="#e81a6e"/><path d="M4 5.5L10.5 10L4 14.5Z M16 5.5V14.5L10.5 10Z" fill="#fff"/></svg>
<div class="a" style="left:596px;top:1438px;width:28px;height:2px;background:#76b9ed;"></div>
<svg class="b" style="left:638.0px;top:1416px" width="18" height="18" viewBox="0 0 20 20"><rect x="3" y="2" width="16" height="12" fill="#c9ccd0"/><rect x="4.5" y="3.5" width="13" height="9" fill="#eaf4fb"/><path d="M5 9L8 6L10.5 10L13 5.5L17 9" fill="none" stroke="#2e8ad0" stroke-width="1.2"/><rect x="8.5" y="14" width="5" height="2.5" fill="#9a9da1"/><rect x="6" y="16.5" width="10" height="2" fill="#b5b8bc"/><rect x="0.5" y="8" width="4" height="11" fill="#8f9a8a"/></svg>
<div class="a" style="left:633px;top:1438px;width:28px;height:2px;background:#76b9ed;"></div>
<div class="a" style="left:667px;top:1410px;width:33px;height:30px;background:#3a3a3a;"></div>
<svg class="b" style="left:675.0px;top:1416px" width="18" height="18" viewBox="0 0 20 20"><rect x="0.5" y="0.5" width="19" height="19" fill="#21d789"/><rect x="2" y="2" width="16" height="16" fill="#000"/><path d="M4.2 11V5H6.6C9 5 9 8.3 6.6 8.3H4.2 M15.8 6C13.2 4 10.6 5.6 10.6 8C10.6 10.4 13.2 12 15.8 10" fill="none" stroke="#fff" stroke-width="1.5"/><path d="M4 15.2H10.5" stroke="#fff" stroke-width="1.6"/></svg>
<div class="a" style="left:667px;top:1438px;width:33px;height:2px;background:#76b9ed;"></div>
<div class="a" style="left:704px;top:1413px;width:1px;height:24px;background:#4a4a4a;"></div>
<div class="a" style="left:708px;top:1410px;width:28px;height:30px;background:#3a8537;"></div>
<svg class="b" style="left:712.0px;top:1416px" width="18" height="18" viewBox="0 0 20 20"><path d="M6.5 15.5A5 5 0 1 1 10.5 7.5" fill="none" stroke="#3f82e8" stroke-width="2"/><path d="M10 6C11 1.5 18 2.5 17 8C16.5 12 13 16 9 17" fill="none" stroke="#f2c230" stroke-width="2"/><path d="M5 13C8 16 13 15.5 15.5 12" fill="none" stroke="#2da04f" stroke-width="2"/></svg>
<div class="a" style="left:708px;top:1438px;width:28px;height:2px;background:#5fe04f;"></div>
<svg class="b" style="left:749.0px;top:1416px" width="18" height="18" viewBox="0 0 20 20"><path d="M4 0.5H19.5V16L16 19.5H0.5V4Z" fill="#f4f6f8"/><path d="M0.5 4L4 0.5H9L0.5 9Z M19.5 16L16 19.5H11L19.5 11Z" fill="#8c9aa5"/><path d="M7.5 16V5H12C16.5 5 16.5 12 12 12H9.5" fill="none" stroke="#1d8fe8" stroke-width="3"/></svg>
<div class="a" style="left:744px;top:1438px;width:28px;height:2px;background:#76b9ed;"></div>
<svg class="b" style="left:786.0px;top:1416px" width="18" height="18" viewBox="0 0 20 20"><path d="M6 1H19.5V19H6Z" fill="#f4f6f8"/><path d="M6 1H19.5V19H6Z" fill="none" stroke="#2b62b8" stroke-width="1"/><rect x="0.5" y="4" width="13" height="12" fill="#2458b0"/><path d="M2.5 6.5L4.5 13.5L7 8L9.5 13.5L11.5 6.5" fill="none" stroke="#fff" stroke-width="1.6"/></svg>
<div class="a" style="left:781px;top:1438px;width:28px;height:2px;background:#76b9ed;"></div>
<svg class="b" style="left:823.0px;top:1416px" width="18" height="18" viewBox="0 0 20 20"><rect x="2" y="0.5" width="16" height="19" fill="#f7f2ee"/><rect x="2" y="0.5" width="4.5" height="19" fill="#e4572e"/><rect x="15.5" y="0.5" width="2.5" height="19" fill="#e4572e"/><circle cx="11" cy="12.5" r="3" fill="none" stroke="#e4572e" stroke-width="1.6"/></svg>
<div class="a" style="left:818px;top:1438px;width:28px;height:2px;background:#76b9ed;"></div>
<svg class="b" style="left:860.0px;top:1416px" width="18" height="18" viewBox="0 0 20 20"><rect x="2" y="3" width="14" height="16" fill="#f4f7e6"/><rect x="2" y="1" width="14" height="3" fill="#3a3a3a"/><rect x="3.5" y="8" width="11" height="9" fill="#9ad83c"/><path d="M18.5 1.5L10 14L8.5 16.5L11.5 15.5L19.5 3Z" fill="#e8a22e"/><path d="M18.5 1.5L19.8 2.6L18.5 4.6L17.2 3.6Z" fill="#d8342e"/></svg>
<div class="a" style="left:855px;top:1438px;width:28px;height:2px;background:#76b9ed;"></div>
<svg class="b" style="left:897.0px;top:1416px" width="18" height="18" viewBox="0 0 20 20"><circle cx="10" cy="10" r="9.6" fill="#e8eaf2"/><path d="M4 8C4 2 16 2 16 8L14.5 6.5H5.5Z" fill="#4a5a9a"/><ellipse cx="10" cy="10.5" rx="4.5" ry="4" fill="#f4e4da"/><path d="M4.5 19C5 14.5 15 14.5 15.5 19Z" fill="#5a6aa8"/><circle cx="8.2" cy="10.2" r=".8" fill="#333"/><circle cx="11.8" cy="10.2" r=".8" fill="#333"/></svg>
<div class="a" style="left:892px;top:1438px;width:28px;height:2px;background:#76b9ed;"></div>
<svg class="b" style="left:2073px;top:1420px" width="14" height="9"><path d="M1 8L7 1.5L13 8" fill="none" stroke="#fff" stroke-width="1.4"/></svg>
<svg class="b" style="left:2096.0px;top:1417px" width="16" height="16" viewBox="0 0 16 16"><defs><linearGradient id="pg2" x1="0" y1="0" x2="1" y2="1"><stop offset="0" stop-color="#5d3be8"/><stop offset="1" stop-color="#e83bb8"/></linearGradient></defs><rect x="0" y="0" width="16" height="16" rx="5" fill="url(#pg2)"/><path d="M4 4V12 M6 4V12 M8 4L12 6.5 M8 6.5L12 9 M8 9L12 11.5 M10 11V12" stroke="#fff" stroke-width="1"/></svg>
<svg class="b" style="left:2120.0px;top:1417px" width="16" height="16" viewBox="0 0 16 16"><path d="M8 0.5L10.5 3L14 2.5L13.5 6.5L15.5 9L13 11L12.5 14.5L9 13.5L6.5 15.5L5 12.5L1 11.5L2.5 8.5L0.5 5L4.5 4.5Z" fill="#e68a9a"/><circle cx="8" cy="8" r="3" fill="#f6cfd6"/></svg>
<svg class="b" style="left:2144.0px;top:1417px" width="16" height="16" viewBox="0 0 16 16"><rect x="0" y="0" width="16" height="16" rx="4" fill="#e81a6e"/><path d="M3 4.5L8.5 8L3 11.5Z M13 4.5V11.5L8.5 8Z" fill="#fff"/></svg>
<svg class="b" style="left:2168.0px;top:1417px" width="16" height="16" viewBox="0 0 16 16"><circle cx="8" cy="8" r="7.6" fill="#2e9a5a"/><path d="M8 0.4A7.6 7.6 0 0 1 15.6 8H8Z" fill="#e8c22e"/><path d="M8 8H15.6A7.6 7.6 0 0 1 8 15.6Z" fill="#2e6ad8"/><circle cx="8" cy="8" r="4.8" fill="#3a7ae8"/><path d="M6.5 5.2L11.2 8L6.5 10.8Z" fill="#fff"/></svg>
<svg class="b" style="left:2192.0px;top:1417px" width="16" height="16" viewBox="0 0 16 16"><rect x="0" y="0" width="16" height="16" rx="3" fill="#fff"/><path d="M2.5 4.5H9V7H7V12.5H4.5V7H2.5Z" fill="#1d8fe8"/><path d="M9.5 6H13.5V12.5H11V8.5H9.5Z" fill="#0a5ab8"/></svg>
<svg class="b" style="left:2216.0px;top:1417px" width="16" height="16" viewBox="0 0 16 16"><rect x="0" y="0" width="16" height="16" rx="3" fill="#d81e2a"/><path d="M3 11.5H13C14.5 8.5 11.5 7.5 10.5 8.5C10 5.5 6 5.5 5.5 8.5C3 8 2 10.5 3 11.5Z" fill="none" stroke="#fff" stroke-width="1.2"/></svg>
<svg class="b" style="left:2240.0px;top:1417px" width="16" height="16" viewBox="0 0 16 16"><circle cx="9.5" cy="6.5" r="4.6" fill="none" stroke="#f08a1e" stroke-width="2.6"/><path d="M6 10L1.5 14.5" stroke="#f08a1e" stroke-width="3"/></svg>
<svg class="b" style="left:2264.0px;top:1417px" width="16" height="16" viewBox="0 0 16 16"><ellipse cx="6.5" cy="6.5" rx="6" ry="5.2" fill="#3fc350"/><ellipse cx="11" cy="10.5" rx="4.8" ry="4" fill="#e6e6e6"/></svg>
<svg class="b" style="left:2287.5px;top:1416px" width="17" height="17" viewBox="0 0 16 16"><ellipse cx="8" cy="6" rx="4.6" ry="5.6" fill="#1a1a1a"/><ellipse cx="8" cy="11" rx="6" ry="4.6" fill="#1a1a1a"/><ellipse cx="8" cy="11.5" rx="3.6" ry="3.6" fill="#fff"/><path d="M2.5 9.2C5 11 11 11 13.5 9.2L13 11.5C11 12.5 5 12.5 3 11.5Z" fill="#e8262e"/><ellipse cx="6.4" cy="4.6" rx="1" ry="1.5" fill="#fff"/><ellipse cx="9.6" cy="4.6" rx="1" ry="1.5" fill="#fff"/><ellipse cx="8" cy="7.4" rx="2.4" ry=".9" fill="#f0a81e"/><ellipse cx="5" cy="15.3" rx="2.6" ry="1" fill="#f0a81e"/><ellipse cx="11" cy="15.3" rx="2.6" ry="1" fill="#f0a81e"/></svg>
<svg class="b" style="left:2311.5px;top:1416px" width="17" height="17" viewBox="0 0 16 16"><ellipse cx="8" cy="6" rx="4.6" ry="5.6" fill="#1a1a1a"/><ellipse cx="8" cy="11" rx="6" ry="4.6" fill="#1a1a1a"/><ellipse cx="8" cy="11.5" rx="3.6" ry="3.6" fill="#fff"/><path d="M2.5 9.2C5 11 11 11 13.5 9.2L13 11.5C11 12.5 5 12.5 3 11.5Z" fill="#e8262e"/><ellipse cx="6.4" cy="4.6" rx="1" ry="1.5" fill="#fff"/><ellipse cx="9.6" cy="4.6" rx="1" ry="1.5" fill="#fff"/><ellipse cx="8" cy="7.4" rx="2.4" ry=".9" fill="#f0a81e"/><ellipse cx="5" cy="15.3" rx="2.6" ry="1" fill="#f0a81e"/><ellipse cx="11" cy="15.3" rx="2.6" ry="1" fill="#f0a81e"/></svg>
<svg class="b" style="left:2335.5px;top:1416px" width="17" height="17" viewBox="0 0 16 16"><ellipse cx="8" cy="6" rx="4.6" ry="5.6" fill="#1a1a1a"/><ellipse cx="8" cy="11" rx="6" ry="4.6" fill="#1a1a1a"/><ellipse cx="8" cy="11.5" rx="3.6" ry="3.6" fill="#fff"/><path d="M2.5 9.2C5 11 11 11 13.5 9.2L13 11.5C11 12.5 5 12.5 3 11.5Z" fill="#e8262e"/><ellipse cx="6.4" cy="4.6" rx="1" ry="1.5" fill="#fff"/><ellipse cx="9.6" cy="4.6" rx="1" ry="1.5" fill="#fff"/><ellipse cx="8" cy="7.4" rx="2.4" ry=".9" fill="#f0a81e"/><ellipse cx="5" cy="15.3" rx="2.6" ry="1" fill="#f0a81e"/><ellipse cx="11" cy="15.3" rx="2.6" ry="1" fill="#f0a81e"/></svg>
<svg class="b" style="left:2360.0px;top:1417px" width="16" height="16" viewBox="0 0 16 16"><path d="M3.5 2.5H15.5V11.5H5.5 M9.5 11.5V14.5 M6 14.5H13" fill="none" stroke="#fff" stroke-width="1.1"/><rect x="0.5" y="0.5" width="4.5" height="7" fill="#1a1a1a" stroke="#fff" stroke-width="1"/><path d="M2 2.6H3.6" stroke="#fff" stroke-width="1"/></svg>
<svg class="b" style="left:2384.0px;top:1417px" width="16" height="16" viewBox="0 0 16 16"><path d="M1 5.5H4L8 2V14L4 10.5H1Z" fill="none" stroke="#fff" stroke-width="1.1"/><path d="M10 5.5C11.2 7 11.2 9 10 10.5 M12 3.8C14 6.2 14 9.8 12 12.2" fill="none" stroke="#fff" stroke-width="1.1"/><path d="M14 2.2C16.8 5.6 16.8 10.4 14 13.8" fill="none" stroke="#888" stroke-width="1"/></svg>
<span class="a" style="left:2408px;top:1415px;width:15px;height:20px;line-height:20px;font-size:14.4px;color:#fff;white-space:nowrap;overflow:hidden;font-family:'Liberation Sans','Noto Sans CJK SC',sans-serif">中</span>
<svg class="b" style="left:2435px;top:1416px" width="18" height="18" viewBox="0 0 18 18"><rect x="1" y="1" width="16" height="16" rx="3.5" fill="#e8421e" transform="rotate(-10 9 9)"/><path d="M12.8 5.2C9 3.4 5 4.6 5.4 7C5.8 9.4 12.6 8.4 12.8 11C13 13.6 8 14.2 4.6 12.4" fill="none" stroke="#fff" stroke-width="2"/></svg>
<span class="a" style="left:2469px;top:1414px;height:22px;line-height:22px;font-size:12.3px;color:#fff;white-space:nowrap">20:47</span>
<svg class="b" style="left:2518px;top:1416px" width="18" height="18"><path d="M0.5 0.5H17.5V13.5H11L9 16L7 13.5H0.5Z" fill="#fff"/><path d="M3.5 4.5H14.5 M3.5 7.5H14.5 M3.5 10.5H11" stroke="#1a1a1a" stroke-width="1.2"/></svg>
<div class="a" style="left:2554px;top:1411px;width:1px;height:29px;background:#555;"></div>
<div class="a" style="left:2373px;top:90px;width:186px;height:38px;background:#4b4d4d;border:1px solid #636569;box-sizing:content-box"></div>
<span class="t" style="left:2385px;top:95.0px;color:#bbbbbb;transform:scaleX(1.0455);">Stop 'main'</span>
<span class="t" style="left:2486.3px;top:95.0px;color:#8e9092;transform:scaleX(1.0117);">Ctrl+F2</span>
<svg class="b" style="left:2485px;top:62px" width="14" height="22"><path d="M0.7 0.7V17.3L4.6 13.6L7.4 20.3L10 19.2L7.2 12.7H12.6Z" fill="#fff" stroke="#000" stroke-width="1"/></svg>
<div class="a" style="left:2430px;top:1152px;width:128px;height:26px;background:#fdfdfd;border-radius:3px;box-shadow:0 0 2px rgba(0,0,0,.4)"></div>
<svg class="b" style="left:2405px;top:1147px" width="34" height="34" viewBox="0 0 34 34"><rect x="3" y="3" width="27" height="27" rx="3" fill="#e5492a" transform="rotate(-12 17 17)"/><path d="M25 9.5C19 6.5 10 8 10.5 12.5C11 17 24 15 24.5 20C25 25 14 26.5 7 23" fill="none" stroke="#fff" stroke-width="4"/></svg>
<span class="a" style="left:2443px;top:1154px;width:16px;height:22px;line-height:22px;font-size:15.4px;font-weight:bold;color:#1a6fd0;white-space:nowrap;overflow:hidden;font-family:'Liberation Sans','Noto Sans CJK SC',sans-serif">中</span>
<svg class="b" style="left:2468px;top:1156px" width="90" height="18"><circle cx="3.5" cy="5.5" r="1.7" fill="none" stroke="#1a6fd0" stroke-width="1.2"/><path d="M9 9.5C10.6 9.5 10.8 12.5 8.6 13.8" fill="none" stroke="#1a6fd0" stroke-width="1.8"/><rect x="27.5" y="1" width="6" height="10" rx="3" fill="#1a6fd0"/><path d="M25.3 7.5C25.3 14 35.7 14 35.7 7.5 M30.5 12.5V15.5 M28 15.8H33" fill="none" stroke="#1a6fd0" stroke-width="1.4"/><rect x="48.7" y="3.7" width="13.6" height="10" rx="1.5" fill="none" stroke="#1a6fd0" stroke-width="1.5"/><path d="M51 6.5H60 M51 8.8H60 M52.5 11.3H58.5" stroke="#1a6fd0" stroke-width="1.3" stroke-dasharray="1.6 1"/><rect x="73.5" y="3" width="5.4" height="5.4" rx="1" fill="#1a6fd0"/><rect x="80.6" y="3" width="5.4" height="5.4" rx="1" fill="none" stroke="#1a6fd0" stroke-width="1.3"/><rect x="73.5" y="10" width="5.4" height="5.4" rx="1" fill="#1a6fd0"/><rect x="80" y="10" width="5.4" height="5.4" rx="1" fill="#1a6fd0"/></svg>
<div class="a" style="left:2368px;top:1317px;width:47px;height:47px;border-radius:50%;border:2.5px solid #fff;background:linear-gradient(200deg,#2f7df0 10%,#4f9df8 55%,#7cc4fb 100%)"></div>
<span class="a" style="left:2368px;top:1330px;width:52px;text-align:center;height:24px;line-height:24px;font-size:14.2px;color:#fff;letter-spacing:-.3px">02:27</span>
<div class="a" style="left:2545px;top:385px;width:48px;height:48px;border-radius:50%;background:#a4dcc8;border:1px solid #c8eede"></div>
</body></html>
